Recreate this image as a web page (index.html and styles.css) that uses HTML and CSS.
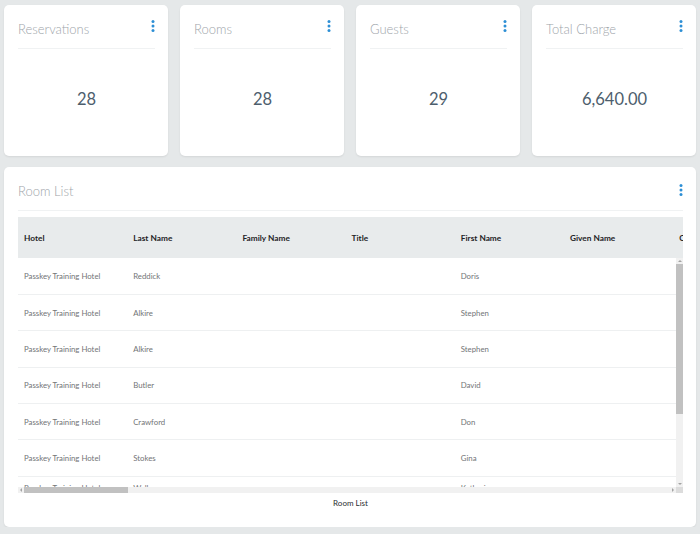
FILE: index.html
```html
<!DOCTYPE html>
<html>
<head>
<meta charset="utf-8">
<link rel="stylesheet" href="styles.css">
</head>
<body>
<div class="stats">
  <div class="card stat">
    <div class="card-head"><span class="card-title">Reservations</span><svg class="kebab" width="4" height="12" viewBox="0 0 4 12"><circle cx="2" cy="1.6" r="1.5"/><circle cx="2" cy="6" r="1.5"/><circle cx="2" cy="10.4" r="1.5"/></svg></div>
    <div class="stat-value">28</div>
  </div>
  <div class="card stat">
    <div class="card-head"><span class="card-title">Rooms</span><svg class="kebab" width="4" height="12" viewBox="0 0 4 12"><circle cx="2" cy="1.6" r="1.5"/><circle cx="2" cy="6" r="1.5"/><circle cx="2" cy="10.4" r="1.5"/></svg></div>
    <div class="stat-value">28</div>
  </div>
  <div class="card stat">
    <div class="card-head"><span class="card-title">Guests</span><svg class="kebab" width="4" height="12" viewBox="0 0 4 12"><circle cx="2" cy="1.6" r="1.5"/><circle cx="2" cy="6" r="1.5"/><circle cx="2" cy="10.4" r="1.5"/></svg></div>
    <div class="stat-value">29</div>
  </div>
  <div class="card stat">
    <div class="card-head"><span class="card-title">Total Charge</span><svg class="kebab" width="4" height="12" viewBox="0 0 4 12"><circle cx="2" cy="1.6" r="1.5"/><circle cx="2" cy="6" r="1.5"/><circle cx="2" cy="10.4" r="1.5"/></svg></div>
    <div class="stat-value">6,640.00</div>
  </div>
</div>

<div class="card list">
  <div class="card-head list-head"><span class="card-title">Room List</span><svg class="kebab" width="4" height="12" viewBox="0 0 4 12"><circle cx="2" cy="1.6" r="1.5"/><circle cx="2" cy="6" r="1.5"/><circle cx="2" cy="10.4" r="1.5"/></svg></div>
  <div class="grid">
    <div class="grid-header">
      <table class="grid-table">
        <colgroup><col class="c"><col class="c"><col class="c"><col class="c"><col class="c"><col class="c"><col class="c"><col class="filler"></colgroup>
        <thead><tr><th>Hotel</th><th>Last Name</th><th>Family Name</th><th>Title</th><th>First Name</th><th>Given Name</th><th>C</th><th></th></tr></thead>
      </table>
    </div>
    <div class="grid-body">
      <div class="viewport">
        <table class="grid-table">
          <colgroup><col class="c"><col class="c"><col class="c"><col class="c"><col class="c"><col class="c"><col class="c"><col class="filler"></colgroup>
          <tbody>
            <tr><td>Passkey Training Hotel</td><td>Reddick</td><td></td><td></td><td>Doris</td><td></td><td></td><td></td></tr>
            <tr><td>Passkey Training Hotel</td><td>Alkire</td><td></td><td></td><td>Stephen</td><td></td><td></td><td></td></tr>
            <tr><td>Passkey Training Hotel</td><td>Alkire</td><td></td><td></td><td>Stephen</td><td></td><td></td><td></td></tr>
            <tr><td>Passkey Training Hotel</td><td>Butler</td><td></td><td></td><td>David</td><td></td><td></td><td></td></tr>
            <tr><td>Passkey Training Hotel</td><td>Crawford</td><td></td><td></td><td>Don</td><td></td><td></td><td></td></tr>
            <tr><td>Passkey Training Hotel</td><td>Stokes</td><td></td><td></td><td>Gina</td><td></td><td></td><td></td></tr>
            <tr class="last"><td>Passkey Training Hotel</td><td>Walker</td><td></td><td></td><td>Katherine</td><td></td><td></td><td></td></tr>
          </tbody>
        </table>
      </div>
      <div class="vscroll">
        <span class="arrow up"></span>
        <div class="vtrack"><div class="vthumb"></div></div>
        <span class="arrow down"></span>
      </div>
      <div class="hscroll">
        <span class="arrow left"></span>
        <div class="htrack"><div class="hthumb"></div></div>
        <span class="arrow right"></span>
      </div>
      <div class="corner"></div>
    </div>
  </div>
  <div class="caption">Room List</div>
</div>
</body>
</html>
```

FILE: styles.css
```css
html, body {
  margin: 0;
  background: #e5e8e9;
}
body {
  padding: 5px 4px 0 4px;
  font-family: Lato, "Open Sans", "Liberation Sans", sans-serif;
}
.stats {
  display: grid;
  grid-template-columns: repeat(4, 1fr);
  column-gap: 12px;
  margin-bottom: 11px;
}
.card {
  background: #fff;
  border-radius: 5px;
  box-shadow: 0 1px 2px rgba(0,0,0,0.08);
}
.stat {
  height: 151px;
  padding: 0 13px 0 14px;
  box-sizing: border-box;
  display: flex;
  flex-direction: column;
}
.card-head {
  display: flex;
  justify-content: space-between;
  align-items: flex-start;
  padding-top: 13px;
  padding-bottom: 9px;
  border-bottom: 1px solid #f0f2f3;
}
.card-title {
  font-size: 13px;
  line-height: 20px;
  font-weight: 300;
  color: #9ea5aa;
  padding-top: 1px;
}
.kebab {
  fill: #2d8fd5;
  margin-top: 2px;
  display: block;
}
.stat-value {
  flex: 1;
  display: flex;
  align-items: center;
  justify-content: center;
  font-size: 16.5px;
  color: #4d5e6d;
  padding-bottom: 8px;
}
.list {
  height: 360px;
  padding: 0 13px 0 14px;
  box-sizing: border-box;
}
.list-head {
  padding-top: 14px;
  padding-bottom: 9px;
}
.list-head .card-title {
  padding-top: 0;
}
.list-head .kebab {
  margin-top: 3px;
}
.grid {
  margin-top: 6px;
  width: 665px;
}
.grid-header {
  overflow: hidden;
  background: #e8ebec;
  height: 41px;
}
.grid-table {
  border-collapse: collapse;
  table-layout: fixed;
  width: 4000px;
}
col.c { width: 109.2px; }
col.filler { width: 3235.6px; }
.grid-table th {
  height: 41px;
  padding: 0 0 0 6px;
  text-align: left;
  font-size: 8.3px;
  font-weight: 700;
  color: #1e2326;
  white-space: nowrap;
  overflow: hidden;
}
.grid-body {
  height: 235px;
  display: grid;
  grid-template-columns: 1fr 7px;
  grid-template-rows: 1fr 6px;
}
.viewport {
  overflow: hidden;
  min-width: 0;
}
.grid-table td {
  height: 36.4px;
  box-sizing: border-box;
  padding: 0 0 0 6px;
  font-size: 7.8px;
  color: #727476;
  border-bottom: 1px solid #eef0f1;
  white-space: nowrap;
  overflow: hidden;
}
.grid-table tr.last td {
  vertical-align: top;
  padding-top: 6px;
}
.vscroll {
  background: #f1f1f1;
  display: flex;
  flex-direction: column;
  align-items: center;
}
.vtrack {
  flex: 1;
  width: 100%;
}
.vthumb {
  height: 150px;
  background: #c1c1c1;
}
.hscroll {
  background: #f1f1f1;
  display: flex;
  align-items: center;
}
.htrack {
  flex: 1;
  height: 100%;
}
.hthumb {
  width: 104px;
  height: 100%;
  background: #c1c1c1;
}
.corner {
  background: #dcdcdc;
}
.arrow {
  display: block;
  width: 0;
  height: 0;
  flex: none;
}
.arrow.up {
  margin: 2px 0 2px;
  border-left: 2px solid transparent;
  border-right: 2px solid transparent;
  border-bottom: 2px solid #a3a3a3;
}
.arrow.down {
  margin: 2px 0 2px;
  border-left: 2px solid transparent;
  border-right: 2px solid transparent;
  border-top: 2px solid #a3a3a3;
}
.arrow.left {
  margin: 0 2px;
  border-top: 2px solid transparent;
  border-bottom: 2px solid transparent;
  border-right: 2px solid #a3a3a3;
}
.arrow.right {
  margin: 0 2px;
  border-top: 2px solid transparent;
  border-bottom: 2px solid transparent;
  border-left: 2px solid #a3a3a3;
}
.caption {
  text-align: center;
  font-size: 8px;
  line-height: 12px;
  color: #2a2e31;
  margin-top: 4px;
}
```
